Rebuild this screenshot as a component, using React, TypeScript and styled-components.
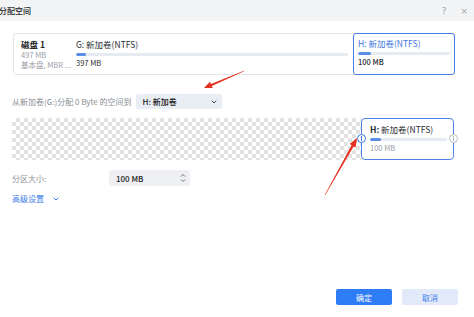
import React from 'react'
import styled, { createGlobalStyle } from 'styled-components'

const GlobalStyle = createGlobalStyle`
  html, body {
    margin: 0;
    padding: 0;
    background: #ffffff;
  }
  body {
    font-family: "Noto Sans CJK SC", "Noto Sans", sans-serif;
    color: #333840;
  }
`

const Dialog = styled.div`
  position: relative;
  width: 474px;
  height: 317px;
  display: flex;
  flex-direction: column;
  background: #ffffff;
  overflow: hidden;
`

const TitleBar = styled.div`
  height: 21px;
  display: flex;
  align-items: center;
  justify-content: space-between;
  background: #f3f4f6;
  padding: 0 6px 0 0;
`

const Title = styled.div`
  font-size: 8px;
  font-weight: 500;
  color: #222;
  margin-left: -1px;
`

const TitleButtons = styled.div`
  display: flex;
  gap: 14px;
  font-family: "DejaVu Sans", sans-serif;
  font-size: 9px;
  color: #9aa0a8;
`

const Body = styled.div`
  flex: 1;
  display: flex;
  flex-direction: column;
  padding: 12px 19px 0 12px;
`

const DiskCard = styled.div`
  height: 42px;
  margin-left: 1px;
  border: 1px solid #e3e5e9;
  border-radius: 3px;
  display: flex;
  box-sizing: border-box;
`

const DiskInfo = styled.div`
  width: 55px;
  padding: 4px 0 0 7px;
  display: flex;
  flex-direction: column;
`

const DiskName = styled.div`
  font-size: 8.5px;
  font-weight: 700;
  color: #222;
  line-height: 12px;
`

const SmallGray = styled.div`
  font-size: 7.5px;
  color: #9a9ea6;
  line-height: 10px;
  white-space: nowrap;
`

const Partition = styled.div<{ $selected?: boolean }>`
  display: flex;
  flex-direction: column;
  box-sizing: border-box;
  padding: ${({ $selected }) => ($selected ? '4px 4px 0 4px' : '5px 5px 0 0')};
  ${({ $selected }) =>
    $selected
      ? `
    width: 102px;
    margin: -1px -1px -1px 0;
    border: 1.5px solid #4a7fe2;
    border-radius: 3px;
  `
      : 'flex: 1;'}
`

const PartName = styled.div<{ $blue?: boolean }>`
  font-size: 8.5px;
  line-height: 11px;
  color: ${({ $blue }) => ($blue ? '#3f78e0' : '#2a2e35')};
  white-space: nowrap;
`

const Bar = styled.div`
  height: 3px;
  border-radius: 2px;
  background: #e6eaf1;
  margin: 3px 0 2px;
  overflow: hidden;
`

const BarFill = styled.div`
  height: 100%;
  border-radius: 2px;
  background: #5a8de6;
`

const PartSize = styled.div<{ $muted?: boolean; $strong?: boolean }>`
  font-size: 7.5px;
  line-height: 10px;
  color: ${({ $muted }) => ($muted ? '#9a9ea6' : '#2a2e35')};
  font-weight: ${({ $strong }) => ($strong ? 500 : 400)};
`

const AllocRow = styled.div`
  display: flex;
  align-items: center;
  margin-top: 19px;
  height: 15px;
`

const Label = styled.div<{ $width?: number }>`
  font-size: 8px;
  color: #8a8f97;
  white-space: nowrap;
  width: ${({ $width }) => ($width ? `${$width}px` : 'auto')};
`

const Select = styled.div`
  margin-left: 4px;
  width: 86px;
  height: 15px;
  box-sizing: border-box;
  background: #e9edf4;
  border-radius: 2px;
  display: flex;
  align-items: center;
  justify-content: space-between;
  padding: 0 5px 0 7px;
  font-size: 8px;
  font-weight: 500;
  color: #222;
`

const Chevron = styled.svg`
  width: 6px;
  height: 6px;
`

const ResizeRow = styled.div`
  display: flex;
  margin-top: 9px;
  height: 42px;
`

const Free = styled.div`
  flex: 1;
  background-color: #ffffff;
  background-image: conic-gradient(#e2e2e2 25%, transparent 0 50%, #e2e2e2 0 75%, transparent 0);
  background-size: 8px 8px;
`

const HCard = styled.div`
  position: relative;
  width: 93px;
  box-sizing: border-box;
  border: 1.5px solid #4f83e6;
  border-radius: 4px;
  padding: 5px 6px 0 8px;
  display: flex;
  flex-direction: column;
  margin-right: 1px;
`

const Bold = styled.span`
  font-weight: 700;
`

const Handle = styled.div<{ $side: 'left' | 'right'; $active?: boolean }>`
  position: absolute;
  top: 50%;
  ${({ $side }) => ($side === 'left' ? 'left: -5px;' : 'right: -5px;')}
  width: 9px;
  height: 9px;
  margin-top: -5px;
  box-sizing: border-box;
  border-radius: 50%;
  background: #fff;
  border: 1.5px solid ${({ $active }) => ($active ? '#3a78e6' : '#b9bcc2')};
  &::after {
    content: '';
    position: absolute;
    left: 2.5px;
    top: 0.5px;
    width: 1.5px;
    height: 5px;
    background: ${({ $active }) => ($active ? '#3a78e6' : '#b9bcc2')};
  }
`

const SizeRow = styled.div`
  display: flex;
  align-items: center;
  margin-top: 10px;
  height: 16px;
`

const NumberInput = styled.div`
  width: 81px;
  height: 16px;
  box-sizing: border-box;
  background: #eef0f3;
  border-radius: 2px;
  display: flex;
  align-items: center;
  justify-content: space-between;
  padding: 0 4px 0 7px;
  font-size: 8px;
  font-weight: 500;
  color: #222;
`

const Advanced = styled.div`
  display: flex;
  align-items: center;
  gap: 9px;
  margin-top: 7px;
  font-size: 8px;
  color: #3b7de8;
`

const Footer = styled.div`
  display: flex;
  justify-content: flex-end;
  gap: 10px;
  padding: 0 16px 12px 0;
`

const Button = styled.div<{ $primary?: boolean }>`
  width: 56px;
  height: 16px;
  border-radius: 2px;
  display: flex;
  align-items: center;
  justify-content: center;
  font-size: 8px;
  background: ${({ $primary }) => ($primary ? '#2e7cf6' : '#e2eafa')};
  color: ${({ $primary }) => ($primary ? '#ffffff' : '#3b7de8')};
`

const Overlay = styled.svg`
  position: absolute;
  left: 0;
  top: 0;
  pointer-events: none;
`

const ChevronDown = ({ color }: { color: string }) => (
  <Chevron viewBox="0 0 6 6">
    <path d="M1 2 L3 4 L5 2" fill="none" stroke={color} strokeWidth="1" strokeLinecap="round" />
  </Chevron>
)

const Spinner = () => (
  <svg width="6" height="10" viewBox="0 0 6 10">
    <path d="M1 3.5 L3 1.5 L5 3.5" fill="none" stroke="#666" strokeWidth="0.9" />
    <path d="M1 6.5 L3 8.5 L5 6.5" fill="none" stroke="#666" strokeWidth="0.9" />
  </svg>
)

const App: React.FC = () => {
  return (
    <Dialog>
      <GlobalStyle />
      <TitleBar>
        <Title>分配空间</Title>
        <TitleButtons>
          <span>?</span>
          <span>×</span>
        </TitleButtons>
      </TitleBar>
      <Body>
        <DiskCard>
          <DiskInfo>
            <DiskName>磁盘 1</DiskName>
            <SmallGray>497 MB</SmallGray>
            <SmallGray>基本盘, MBR ...</SmallGray>
          </DiskInfo>
          <Partition>
            <PartName>G: 新加卷(NTFS)</PartName>
            <Bar>
              <BarFill style={{ width: '3.5%' }} />
            </Bar>
            <PartSize>397 MB</PartSize>
          </Partition>
          <Partition $selected>
            <PartName $blue>H: 新加卷(NTFS)</PartName>
            <Bar>
              <BarFill style={{ width: '14%' }} />
            </Bar>
            <PartSize $strong>100 MB</PartSize>
          </Partition>
        </DiskCard>

        <AllocRow>
          <Label>从新加卷(G:)分配 0 Byte 的空间到</Label>
          <Select>
            <span>H: 新加卷</span>
            <ChevronDown color="#444" />
          </Select>
        </AllocRow>

        <ResizeRow>
          <Free />
          <HCard>
            <Handle $side="left" $active />
            <Handle $side="right" />
            <PartName>
              <Bold>H:</Bold> 新加卷(NTFS)
            </PartName>
            <Bar>
              <BarFill style={{ width: '14%' }} />
            </Bar>
            <PartSize $muted>100 MB</PartSize>
          </HCard>
        </ResizeRow>

        <SizeRow>
          <Label $width={97}>分区大小:</Label>
          <NumberInput>
            <span>100 MB</span>
            <Spinner />
          </NumberInput>
        </SizeRow>

        <Advanced>
          <span>高级设置</span>
          <ChevronDown color="#3b7de8" />
        </Advanced>
      </Body>
      <Footer>
        <Button $primary>确定</Button>
        <Button>取消</Button>
      </Footer>

      <Overlay width="474" height="317" viewBox="0 0 474 317">
        <polygon
          points="243.9,70.7 211,83.9 210,81.7 204,88 212.8,88.1 211.8,85.9 244.1,71.3"
          fill="#e3301f"
        />
        <polygon
          points="324.7,194.9 351.6,145.2 349.6,144.1 357,138 355.6,147.5 353.6,146.4 325.3,195.1"
          fill="#e3301f"
        />
      </Overlay>
    </Dialog>
  )
}

export default App
